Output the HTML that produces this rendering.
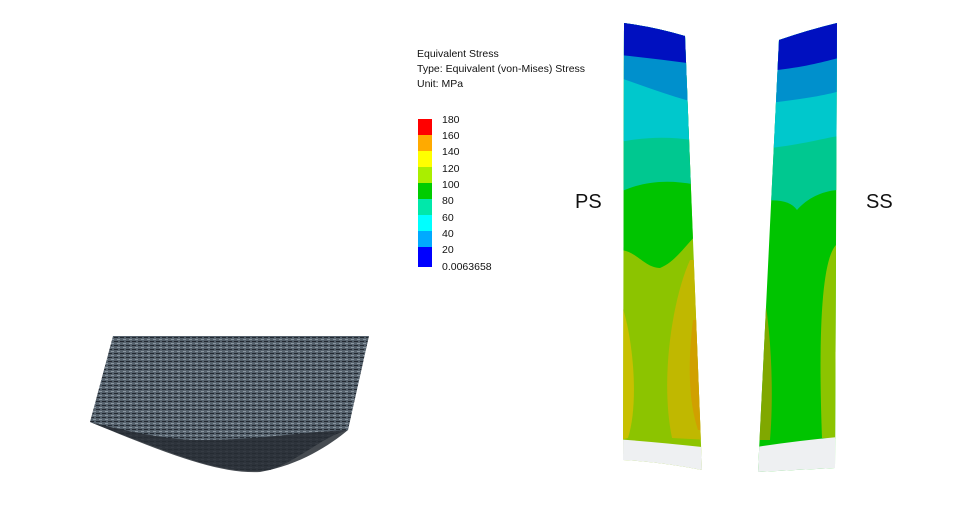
<!DOCTYPE html>
<html><head><meta charset="utf-8"><style>
html,body{margin:0;padding:0;background:#fff;width:960px;height:511px;overflow:hidden}
svg{display:block}
text{font-family:"Liberation Sans","DejaVu Sans",sans-serif;fill:#111}
</style></head><body>
<svg width="960" height="511" viewBox="0 0 960 511">
<defs>
<pattern id="mesh" width="6" height="4" patternUnits="userSpaceOnUse">
<rect width="6" height="4" fill="#56626d"/>
<rect x="0" y="1" width="4" height="1" fill="#222830"/>
<rect x="3" y="3" width="3" height="1" fill="#8a96a0"/>
</pattern>
<clipPath id="ps"><path d="M624,23 Q655,27 685,36 L702,470 Q660,462 623,460 Z"/></clipPath>
<clipPath id="ss"><path d="M779,40 Q808,30 837,23 L835,468 Q795,470 758,472 Z"/></clipPath>
</defs>

<!-- mesh body -->
<path d="M113,336 L369,336 L348,430 C320,438 300,460 270,470 C230,475 190,460 150,445 C125,436 105,428 90,422 Z" fill="url(#mesh)"/>
<path d="M90,422 C130,432 170,440 200,440 C260,440 300,432 348,430 C330,445 300,465 260,472 C220,474 170,455 90,422 Z" fill="#262c33" opacity="0.85"/>

<!-- legend -->
<text x="417" y="57" font-size="10.5">Equivalent Stress</text>
<text x="417" y="72" font-size="10.5">Type: Equivalent (von-Mises) Stress</text>
<text x="417" y="87" font-size="10.5">Unit: MPa</text>
<rect x="418" y="119" width="14" height="16" fill="#ff0000"/>
<rect x="418" y="135" width="14" height="16" fill="#ffaa00"/>
<rect x="418" y="151" width="14" height="16" fill="#ffff00"/>
<rect x="418" y="167" width="14" height="16" fill="#aaee00"/>
<rect x="418" y="183" width="14" height="16" fill="#00cc00"/>
<rect x="418" y="199" width="14" height="16" fill="#00e8aa"/>
<rect x="418" y="215" width="14" height="16" fill="#00ffff"/>
<rect x="418" y="231" width="14" height="16" fill="#00aaff"/>
<rect x="418" y="247" width="14" height="20" fill="#0000ff"/>
<g font-size="10.5">
<text x="442" y="123">180</text><text x="442" y="139">160</text><text x="442" y="155">140</text>
<text x="442" y="172">120</text><text x="442" y="188">100</text><text x="442" y="204">80</text>
<text x="442" y="221">60</text><text x="442" y="237">40</text><text x="442" y="253">20</text>
<text x="442" y="270">0.0063658</text>
</g>
<text x="575" y="208" font-size="20">PS</text>
<text x="866" y="208" font-size="20">SS</text>

<!-- PS blade -->
<g clip-path="url(#ps)">
<rect x="600" y="0" width="120" height="480" fill="#8cc400"/>
<path d="M620,20 H710 V225 C690,235 680,260 660,268 C645,268 635,250 620,250 Z" fill="#00c400"/>
<path d="M620,20 H710 V188 C680,180 650,178 620,192 Z" fill="#00c890"/>
<path d="M620,20 H710 V144 C680,136 650,136 620,142 Z" fill="#00c8cc"/>
<path d="M620,20 H710 V106 C680,100 650,88 620,78 Z" fill="#0090cc"/>
<path d="M620,20 H710 V66 C680,62 650,58 620,55 Z" fill="#0010c0"/>
<path d="M620,300 C632,330 640,400 628,438 L620,440 Z" fill="#c8c000"/>
<path d="M690,260 C672,300 660,380 672,438 L710,440 V260 Z" fill="#c0b800"/>
<path d="M693,320 C688,360 688,400 698,430 L710,430 V320 Z" fill="#d0a000"/>
<path d="M600,438 Q660,442 710,448 V490 H600 Z" fill="#eef0f2"/>
<rect x="600" y="20" width="8" height="460" fill="#000" opacity="0.08"/>
</g>

<!-- SS blade -->
<g clip-path="url(#ss)">
<rect x="750" y="0" width="100" height="480" fill="#00c400"/>
<path d="M750,20 H850 V190 C830,188 810,195 797,210 C790,200 775,198 750,203 Z" fill="#00c890"/>
<path d="M750,20 H850 V135 C830,135 810,145 750,150 Z" fill="#00c8cc"/>
<path d="M750,20 H850 V88 C830,95 800,100 750,105 Z" fill="#0090cc"/>
<path d="M750,20 H850 V55 C830,60 800,70 750,72 Z" fill="#0010c0"/>
<path d="M836,245 C822,260 818,330 822,438 L850,440 V245 Z" fill="#8cc400"/>
<path d="M750,240 C770,290 775,380 770,440 L750,440 Z" fill="#80a800"/>
<path d="M750,448 Q800,440 850,436 V490 H750 Z" fill="#eef0f2"/>
</g>
</svg>
</body></html>
